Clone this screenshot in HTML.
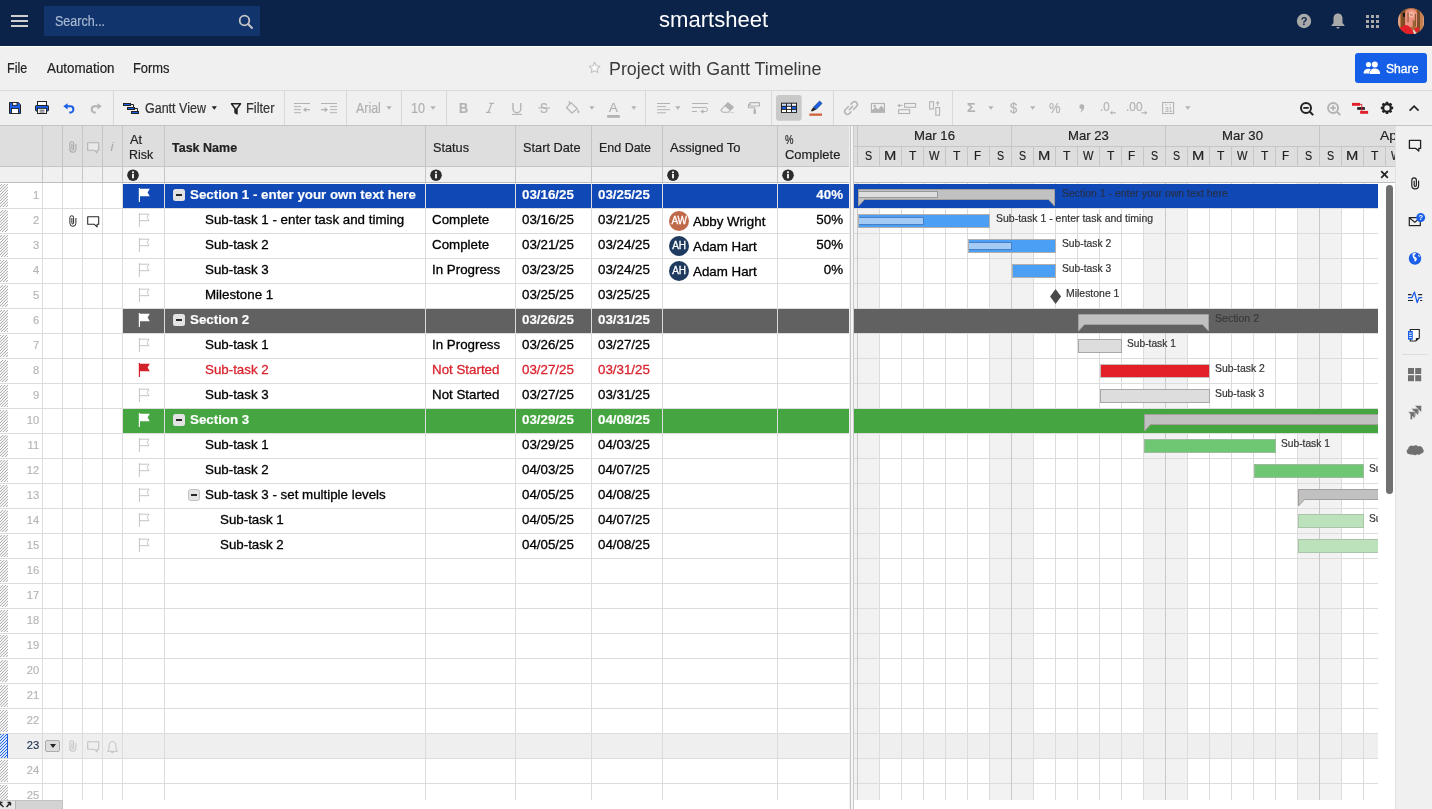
<!DOCTYPE html><html><head><meta charset="utf-8"><title>Project with Gantt Timeline</title><style>
*{box-sizing:border-box;margin:0;padding:0}
html,body{width:1432px;height:809px;overflow:hidden;background:#fff}
body{position:relative;font-family:"Liberation Sans",sans-serif;font-size:13px;color:#111}
.abs{position:absolute}
.t{position:absolute;white-space:nowrap;line-height:1}
#app{position:absolute;left:0;top:0;width:1432px;height:809px;overflow:hidden;background:#fff;will-change:transform;transform:translateZ(0)}
#top{left:0;top:0;width:1432px;height:46px;background:#0b2349}
#menu{left:0;top:47px;width:1432px;height:43px;background:#f0f0f0}
#tool{left:0;top:91px;width:1432px;height:34px;background:#f0f0f0}
.vsep{position:absolute;top:91px;height:34px;width:1px;background:#d9d9d9}
#hdr{left:0;top:126px;width:849px;height:40px;background:#dedede}
#inf{left:0;top:167px;width:849px;height:15px;background:#f0f0f0}
.hl{position:absolute;height:1px;background:#dcdcdc}
.vl{position:absolute;width:1px;background:#dcdcdc}
.rn{position:absolute;left:0;width:39.2px;text-align:right;font-size:11px;color:#b4b4b4;line-height:1;transform:scaleX(1.02);transform-origin:100% 0;-webkit-text-stroke:0.15px currentColor}
.cell{position:absolute;white-space:nowrap;line-height:1;font-size:13.33px;color:#000;-webkit-text-stroke:0.3px currentColor}
.cell.b{-webkit-text-stroke:0.15px currentColor}
.b{font-weight:bold}
.cell.w{color:#fff}
.cell.red{color:#d9232e}
.gl{position:absolute;white-space:nowrap;line-height:1;font-size:11px;color:#333}
</style></head><body><div id="app">
<div id="top" class="abs"></div>
<div class="abs" style="left:11px;top:15px;width:16.500px;height:2px;background:#cfcfcf"></div>
<div class="abs" style="left:11px;top:20px;width:16.500px;height:2px;background:#cfcfcf"></div>
<div class="abs" style="left:11px;top:25px;width:16.500px;height:2px;background:#cfcfcf"></div>
<div class="abs" style="left:44px;top:6px;width:216px;height:30px;background:#10346b;border-radius:1px"></div>
<div class="t" style="left:55.30px;top:14.15px;font-size:14px;color:#a9b9d3;font-weight:normal;font-style:normal;transform:scaleX(0.8941);transform-origin:0 0;-webkit-text-stroke:0.2px currentColor;">Search...</div>
<svg class="abs" style="left:237px;top:13px" width="18" height="18" viewBox="0 0 18 18"><circle cx="7.5" cy="7.5" r="4.8" fill="none" stroke="#c6c6c6" stroke-width="1.8"/><path d="M11 11 L15 15" stroke="#c6c6c6" stroke-width="2" stroke-linecap="round"/></svg>
<div class="t" style="left:659.20px;top:8.75px;font-size:22.5px;color:#fff;font-weight:normal;font-style:normal;transform:scaleX(0.9800);transform-origin:0 0;-webkit-text-stroke:0.2px currentColor;-webkit-text-stroke:0;">smartsheet</div>
<svg class="abs" style="left:1296px;top:13px" width="16" height="16" viewBox="0 0 16 16"><circle cx="8" cy="8" r="7.2" fill="#a9a9a9"/><text x="8" y="12" font-family="Liberation Sans" font-weight="bold" font-size="11" text-anchor="middle" fill="#0b2349">?</text></svg>
<svg class="abs" style="left:1329px;top:12px" width="18" height="18" viewBox="0 0 18 18"><path d="M9 1.5c-3 0-4.5 2.3-4.5 5v4.5L2.5 13.3v.7h13v-.7l-2-2.3V6.500c0-2.700-1.500-5-4.500-5z" fill="#a9a9a9"/><path d="M7 15h4l-2 2z" fill="#a9a9a9"/></svg>
<div class="abs" style="left:1366px;top:15px;width:3px;height:3px;background:#a9a9a9"></div>
<div class="abs" style="left:1366px;top:20px;width:3px;height:3px;background:#a9a9a9"></div>
<div class="abs" style="left:1366px;top:25px;width:3px;height:3px;background:#a9a9a9"></div>
<div class="abs" style="left:1371px;top:15px;width:3px;height:3px;background:#a9a9a9"></div>
<div class="abs" style="left:1371px;top:20px;width:3px;height:3px;background:#a9a9a9"></div>
<div class="abs" style="left:1371px;top:25px;width:3px;height:3px;background:#a9a9a9"></div>
<div class="abs" style="left:1376px;top:15px;width:3px;height:3px;background:#a9a9a9"></div>
<div class="abs" style="left:1376px;top:20px;width:3px;height:3px;background:#a9a9a9"></div>
<div class="abs" style="left:1376px;top:25px;width:3px;height:3px;background:#a9a9a9"></div>
<svg class="abs" style="left:1397.800px;top:7.800px" width="26.400" height="26.400" viewBox="0 0 26 26"><defs><clipPath id="av"><circle cx="13" cy="13" r="13"/></clipPath></defs><g clip-path="url(#av)"><rect width="26" height="26" fill="#b87343"/><rect x="0" y="0" width="2" height="26" fill="#e3a283"/><rect x="24.300" y="0" width="2" height="26" fill="#dd9a78"/><rect x="3.100" y="0" width="3.800" height="26" fill="#7d4c25"/><rect x="18.700" y="0" width="3" height="26" fill="#80502a"/><rect x="21.700" y="0" width="2.600" height="26" fill="#c58150"/><rect x="5" y="5" width="1.800" height="3.700" fill="#0d0d12"/><path d="M7.100 18.500V6c0-3 2.500-4.800 5.900-4.800s5.700 1.800 5.700 4.800v12.500z" fill="#ee9284"/><path d="M10.500 4.500q2.500-2.300 5.500 0v4q-2.700 1.500-5.500 0z" fill="#f7b3a4"/><path d="M9.900 4.500v9.500M17.200 6v12" stroke="#8a5a2c" stroke-width="1.100" fill="none"/><path d="M14.500 11.500l2.300 1.500v7h-2.300z" fill="#9a6434"/><path d="M12 6.800h2.600" stroke="#8a5a2c" stroke-width="0.800"/><path d="M3 18.700L7 16.800L9.900 17.300L14.100 21.500L15.800 26H0V21z" fill="#e3202a"/><path d="M16.200 19.900L20 18.900L21.300 21.200L18.700 24.100L17 22.900z" fill="#e3202a"/><path d="M14.500 21.800h1.300l2.500 3.200-2.100 1z" fill="#dfe3e6"/></g></svg>
<div id="menu" class="abs"></div>
<div class="t" style="left:6.80px;top:61.15px;font-size:14px;color:#222;font-weight:normal;font-style:normal;transform:scaleX(0.8956);transform-origin:0 0;-webkit-text-stroke:0.2px currentColor;">File</div>
<div class="t" style="left:46.80px;top:61.15px;font-size:14px;color:#222;font-weight:normal;font-style:normal;transform:scaleX(0.9538);transform-origin:0 0;-webkit-text-stroke:0.2px currentColor;">Automation</div>
<div class="t" style="left:133.18px;top:61.15px;font-size:14px;color:#222;font-weight:normal;font-style:normal;transform:scaleX(0.9208);transform-origin:0 0;-webkit-text-stroke:0.2px currentColor;">Forms</div>
<svg class="abs" style="left:588.200px;top:61.300px" width="13.200" height="13.200" viewBox="0 0 16 16"><path d="M8 1.600l1.950 4.200 4.550.550-3.400 3.100.9 4.550L8 11.750l-4 2.250.9-4.550-3.400-3.100 4.550-.55z" fill="#fbfbfb" stroke="#c2c2c2" stroke-width="1.300" stroke-linejoin="round"/></svg>
<div class="t" style="left:608.61px;top:59.76px;font-size:18px;color:#3a3a3a;font-weight:normal;font-style:normal;transform:scaleX(0.9920);transform-origin:0 0;-webkit-text-stroke:0.2px currentColor;-webkit-text-stroke:0;">Project with Gantt Timeline</div>
<div class="abs" style="left:1355px;top:53px;width:72px;height:30px;background:#155ee8;border-radius:3px"></div>
<svg class="abs" style="left:1363px;top:61px" width="18" height="14" viewBox="0 0 18 14"><circle cx="5.500" cy="3.500" r="2.600" fill="#fff"/><path d="M0.500 12.500c0-3 2-4.800 5-4.800 1 0 1.800.2 2.500.6-1.200 1-1.800 2.400-1.800 4.200z" fill="#fff"/><circle cx="11.800" cy="3.500" r="3" fill="#fff"/><path d="M6.500 13c0-3.400 2.200-5.400 5.300-5.400s5.300 2 5.300 5.400z" fill="#fff"/></svg>
<div class="t" style="left:1385.50px;top:61.90px;font-size:13px;color:#fff;font-weight:normal;font-style:normal;transform:scaleX(0.9344);transform-origin:0 0;-webkit-text-stroke:0.2px currentColor;-webkit-text-stroke:0.35px #fff;">Share</div>
<div class="hl" style="left:0;top:90px;width:1432px;background:#dadada"></div>
<div id="tool" class="abs"></div>
<div class="hl" style="left:0;top:125px;width:1432px;background:#c4c4c4"></div>
<div class="vsep" style="left:113px"></div>
<div class="vsep" style="left:284px"></div>
<div class="vsep" style="left:346px"></div>
<div class="vsep" style="left:401px"></div>
<div class="vsep" style="left:446px"></div>
<div class="vsep" style="left:645px"></div>
<div class="vsep" style="left:771px"></div>
<div class="vsep" style="left:833px"></div>
<div class="vsep" style="left:952px"></div>
<svg class="abs" style="left:0;top:91px" width="1432" height="34" viewBox="0 91 1432 34"><path d="M9.500 102.500H18.300L20.500 104.700V113.500H9.500Z" fill="#1a5fe8" stroke="#222" stroke-width="1"/><rect x="12.500" y="102.500" width="4.500" height="2.800" fill="#fff" stroke="#222" stroke-width="0.900"/><rect x="11.500" y="108.500" width="7" height="5" fill="#fff" stroke="#222" stroke-width="0.900"/><rect x="35.500" y="105.500" width="13" height="5.500" rx="0.800" fill="#1a5fe8" stroke="#222" stroke-width="1"/><rect x="37.500" y="101.500" width="9" height="4" fill="#fff" stroke="#222" stroke-width="1"/><rect x="37.500" y="108.300" width="9" height="5.200" fill="#fff" stroke="#222" stroke-width="1"/><path d="M39.500 110.200h5M39.500 112h5" stroke="#222" stroke-width="0.800"/><path d="M63.300 106.300L67.600 103.200V109.400Z" fill="#1a5fe8"/><path d="M67 106.300H70.300a3.100 3.100 0 0 1 0 6.200H69.300" fill="none" stroke="#1a5fe8" stroke-width="2"/><path d="M101.800 106.300L97.500 103.200V109.400Z" fill="#b3b3b3"/><path d="M98.100 106.300H94.800a3.100 3.100 0 0 0 0 6.200H95.800" fill="none" stroke="#b3b3b3" stroke-width="2"/><rect x="123.5" y="103.5" width="7" height="2" fill="#1a5fe8" stroke="#222" stroke-width="1"/><rect x="127.5" y="107.5" width="7" height="2" fill="#1a5fe8" stroke="#222" stroke-width="1"/><rect x="131.5" y="111.5" width="7" height="2" fill="#1a5fe8" stroke="#222" stroke-width="1"/><path d="M131 104.500H133.500V107M135 108.500H137.500V111" fill="none" stroke="#222" stroke-width="1"/><path d="M211.7 106.2h5.200l-2.600 3.600z" fill="#222"/><path d="M231.400 103.800h9.200l-3.600 4.700v5.400l-2-1.300v-4.100z" fill="none" stroke="#222" stroke-width="1.400" stroke-linejoin="round"/><path d="M234.900 108.400h2.200v5.400l-2.200-1.300z" fill="#222"/><path d="M294 103.500h16M294 106.600h7M294 109.700h7M294 112.700h7" stroke="#b3b3b3" stroke-width="1"/><path d="M303 109.700l3.200-2.600v5.200z" fill="#b3b3b3"/><path d="M305.500 109.700h4.500" stroke="#b3b3b3" stroke-width="1.300"/><path d="M321 103.500h16M330 106.600h7M330 109.700h7M330 112.700h7" stroke="#b3b3b3" stroke-width="1"/><path d="M328 109.700l-3.200-2.600v5.200z" fill="#b3b3b3"/><path d="M321 109.700h4.500" stroke="#b3b3b3" stroke-width="1.300"/><path d="M386.5 106.2h5.200l-2.600 3.600z" fill="#b3b3b3"/><path d="M430.4 106.2h5.200l-2.600 3.600z" fill="#b3b3b3"/><path d="M489.300 103.300h4.700M486 112.300h4.700M491.800 103.300l-3.500 9" stroke="#b3b3b3" stroke-width="1.200" fill="none"/><path d="M513 103v5.800a3.900 3.900 0 0 0 7.800 0V103" fill="none" stroke="#b3b3b3" stroke-width="1.400"/><path d="M512 114.400h10" stroke="#b3b3b3" stroke-width="1.100"/><path d="M538.300 107.900h11.500" stroke="#b3b3b3" stroke-width="1.100"/><path d="M571 102.600L577.300 108.700L572 113L566.600 107.700Z" fill="none" stroke="#b3b3b3" stroke-width="1.200" stroke-linejoin="round"/><path d="M569.300 100.900q-0.800 1.500 1 3.500" fill="none" stroke="#b3b3b3" stroke-width="1.100"/><path d="M578.300 109.600q1.500 2 0.900 3q-0.900 1-1.800 0q-0.600-1 0.900-3z" fill="#b3b3b3"/><path d="M589.3 106.2h5.200l-2.600 3.600z" fill="#b3b3b3"/><rect x="607.200" y="115" width="12.600" height="2.800" fill="#b3b3b3"/><path d="M631.3 106.2h5.200l-2.600 3.600z" fill="#b3b3b3"/><path d="M657 103.500h13M657 106.600h9M657 109.700h13M657 112.800h9" stroke="#b3b3b3" stroke-width="1"/><path d="M675.3 106.2h5.200l-2.600 3.600z" fill="#b3b3b3"/><path d="M692 103.500h16M692 107.500h13.500a2 2 0 0 1 0 4H703M692 111.500h5" fill="none" stroke="#b3b3b3" stroke-width="1"/><path d="M700.300 111.500l3-2.300v4.600z" fill="#b3b3b3"/><path d="M727.800 102.800L733.400 107.200L728.300 112.300H723L720.800 110.200Z" fill="none" stroke="#b3b3b3" stroke-width="1.100" stroke-linejoin="round"/><path d="M727.800 102.800L733.400 107.200L730 110.600L724.500 106Z" fill="#b3b3b3"/><path d="M730.500 112.500h1M732.500 112.500h1" stroke="#b3b3b3" stroke-width="1"/><rect x="750" y="102.600" width="9.500" height="3.400" rx="0.500" fill="none" stroke="#b3b3b3" stroke-width="1.200"/><path d="M750 104.300H748.500V107.700H754.700V109.500" fill="none" stroke="#b3b3b3" stroke-width="1.100"/><rect x="753.500" y="109.300" width="2.500" height="4.600" fill="#b3b3b3"/><rect x="776" y="95" width="25.700" height="25.700" rx="3" fill="#c9c9c9"/><rect x="781" y="102.700" width="16" height="10.200" fill="#222"/><rect x="782" y="103.7" width="4" height="2.100" fill="#cfe0fb"/><rect x="787" y="103.7" width="4" height="2.100" fill="#cfe0fb"/><rect x="792" y="103.7" width="4" height="2.100" fill="#fff"/><rect x="782" y="106.8" width="4" height="2.100" fill="#1a5fe8"/><rect x="787" y="106.8" width="4" height="2.100" fill="#fff"/><rect x="792" y="106.8" width="4" height="2.100" fill="#1a5fe8"/><rect x="782" y="109.9" width="4" height="2.100" fill="#fff"/><rect x="787" y="109.9" width="4" height="2.100" fill="#fff"/><rect x="792" y="109.9" width="4" height="2.100" fill="#cfe0fb"/><path d="M819.600 101L822 103.400L816 109.600L813.500 107.200Z" fill="#1a5fe8" stroke="#173a7a" stroke-width="0.700"/><path d="M813.500 107.200L816 109.600L812.800 111.200L811 111.200L811.600 109.600Z" fill="#222"/><rect x="809.400" y="113.500" width="12.600" height="2.300" fill="#d0623a"/><g fill="none" stroke="#b3b3b3" stroke-width="1.500" stroke-linecap="round" transform="rotate(-45 851 108)"><path d="M850.300 105.200H846a2.800 2.800 0 0 0 0 5.600H848.300"/><path d="M851.700 110.800H856a2.800 2.800 0 0 0 0-5.600H853.700"/><path d="M848.600 108H853.400"/></g><rect x="871.400" y="103.500" width="13" height="8.800" fill="none" stroke="#b3b3b3" stroke-width="1.200"/><path d="M872 112v-1.800l3.600-3.200 2.600 2.400 3.100-3.900 2.700 3.500v3z" fill="#b3b3b3"/><circle cx="874.700" cy="106" r="1.250" fill="#b3b3b3"/><rect x="904.600" y="103.500" width="11" height="3.800" fill="none" stroke="#b3b3b3" stroke-width="1.100"/><rect x="898.600" y="109.700" width="11" height="3.800" fill="none" stroke="#b3b3b3" stroke-width="1.100"/><path d="M897.200 105.400l2.600-2v4z" fill="#b3b3b3"/><path d="M899 105.400h3.800" stroke="#b3b3b3" stroke-width="1"/><rect x="929.700" y="101.700" width="3.800" height="7.300" fill="none" stroke="#b3b3b3" stroke-width="1.100"/><rect x="935.800" y="107.500" width="3.800" height="7.700" fill="none" stroke="#b3b3b3" stroke-width="1.100"/><path d="M937.700 101l2.100 2.500h-4.200z" fill="#b3b3b3"/><path d="M937.700 103v2.800" stroke="#b3b3b3" stroke-width="1"/><path d="M988.3 106.2h5.200l-2.600 3.600z" fill="#b3b3b3"/><path d="M1030.1 106.2h5.200l-2.600 3.600z" fill="#b3b3b3"/><path d="M1081.800 104.300a2.400 2.400 0 0 1 2.400 2.600q0 3.600-4.300 5.800q1.800-2 1.700-3.600a2.400 2.400 0 0 1 0.200-4.800z" fill="#b3b3b3"/><path d="M1109.800 112.800l2.600-2v4z" fill="#b3b3b3"/><path d="M1112 112.800h4" stroke="#b3b3b3" stroke-width="1.100"/><path d="M1147.500 112.800l-2.600-2v4z" fill="#b3b3b3"/><path d="M1141.400 112.800h4" stroke="#b3b3b3" stroke-width="1.100"/><rect x="1162.600" y="102.500" width="11" height="11" fill="none" stroke="#b3b3b3" stroke-width="1.100"/><rect x="1165.500" y="104.200" width="1.200" height="1.200" fill="#b3b3b3"/><rect x="1169.500" y="104.200" width="1.200" height="1.200" fill="#b3b3b3"/><path d="M1185.2 106.2h5.200l-2.600 3.600z" fill="#b3b3b3"/><circle cx="1306" cy="107.900" r="5" fill="none" stroke="#222" stroke-width="2"/><path d="M1309.800 111.700l3.400 3.400" stroke="#222" stroke-width="2"/><path d="M1303.300 107.900h5.400" stroke="#222" stroke-width="1.800"/><circle cx="1333.100" cy="107.900" r="5" fill="none" stroke="#b3b3b3" stroke-width="2"/><path d="M1336.900 111.700l3.400 3.400" stroke="#b3b3b3" stroke-width="2"/><path d="M1330.400 107.900h5.400M1333.100 105.200v5.400" stroke="#b3b3b3" stroke-width="1.800"/><rect x="1352" y="102.900" width="8" height="2.900" fill="#e0202a"/><rect x="1357.200" y="107.100" width="7.700" height="2.700" fill="#222"/><rect x="1360.100" y="110.900" width="8" height="2.900" fill="#e0202a"/><path d="M1360 104.400h1.800v6.500" fill="none" stroke="#e0202a" stroke-width="1"/><path d="M1393.19 106.71 L1393.19 109.09 L1391.67 109.39 L1391.36 110.14 L1392.22 111.43 L1390.53 113.12 L1389.24 112.26 L1388.49 112.57 L1388.19 114.09 L1385.81 114.09 L1385.51 112.57 L1384.76 112.26 L1383.47 113.12 L1381.78 111.43 L1382.64 110.14 L1382.33 109.39 L1380.81 109.09 L1380.81 106.71 L1382.33 106.41 L1382.64 105.66 L1381.78 104.37 L1383.47 102.68 L1384.76 103.54 L1385.51 103.23 L1385.81 101.71 L1388.19 101.71 L1388.49 103.23 L1389.24 103.54 L1390.53 102.68 L1392.22 104.37 L1391.36 105.66 L1391.67 106.41Z M1389.700 107.900a2.700 2.700 0 1 0 -5.400 0a2.700 2.700 0 1 0 5.400 0Z" fill="#222" fill-rule="evenodd"/><path d="M1409.600 110.600l4.500-4.500 4.500 4.500" fill="none" stroke="#222" stroke-width="1.600"/></svg>
<div class="t" style="left:144.70px;top:101.25px;font-size:14px;color:#333;font-weight:normal;font-style:normal;transform:scaleX(0.8927);transform-origin:0 0;-webkit-text-stroke:0.2px currentColor;">Gantt View</div>
<div class="t" style="left:245.88px;top:101.25px;font-size:14px;color:#333;font-weight:normal;font-style:normal;transform:scaleX(0.9163);transform-origin:0 0;-webkit-text-stroke:0.2px currentColor;">Filter</div>
<div class="t" style="left:356.20px;top:100.95px;font-size:14px;color:#b0b0b0;font-weight:normal;font-style:normal;transform:scaleX(0.8854);transform-origin:0 0;-webkit-text-stroke:0.2px currentColor;">Arial</div>
<div class="t" style="left:410.90px;top:100.95px;font-size:14px;color:#b0b0b0;font-weight:normal;font-style:normal;transform:scaleX(0.8995);transform-origin:0 0;-webkit-text-stroke:0.2px currentColor;">10</div>
<div class="t" style="left:458.70px;top:100.85px;font-size:14px;color:#b3b3b3;font-weight:bold;font-style:normal;transform:scaleX(0.9000);transform-origin:0 0;-webkit-text-stroke:0.2px currentColor;">B</div>
<div class="t" style="left:540.30px;top:101.05px;font-size:14px;color:#b3b3b3;font-weight:normal;font-style:normal;transform:scaleX(0.8444);transform-origin:0 0;-webkit-text-stroke:0.2px currentColor;">S</div>
<div class="t" style="left:609.00px;top:100.70px;font-size:13px;color:#b3b3b3;font-weight:normal;font-style:normal;transform:scaleX(1.0222);transform-origin:0 0;-webkit-text-stroke:0.2px currentColor;">A</div>
<div class="t" style="left:966.80px;top:100.97px;font-size:13.5px;color:#b3b3b3;font-weight:bold;font-style:normal;transform:scaleX(1.0375);transform-origin:0 0;-webkit-text-stroke:0.2px currentColor;">Σ</div>
<div class="t" style="left:1010.10px;top:100.95px;font-size:14px;color:#b3b3b3;font-weight:normal;font-style:normal;transform:scaleX(0.9250);transform-origin:0 0;-webkit-text-stroke:0.2px currentColor;">$</div>
<div class="t" style="left:1049.20px;top:101.35px;font-size:14px;color:#b3b3b3;font-weight:normal;font-style:normal;transform:scaleX(0.9250);transform-origin:0 0;-webkit-text-stroke:0.2px currentColor;">%</div>
<div class="t" style="left:1099.75px;top:101.04px;font-size:12px;color:#b3b3b3;font-weight:normal;font-style:normal;transform:scaleX(0.9535);transform-origin:0 0;-webkit-text-stroke:0.2px currentColor;">.0</div>
<div class="t" style="left:1125.81px;top:101.04px;font-size:12px;color:#b3b3b3;font-weight:normal;font-style:normal;transform:scaleX(0.9870);transform-origin:0 0;-webkit-text-stroke:0.2px currentColor;">.00</div>
<div class="t" style="left:1164.60px;top:105.85px;font-size:7.5px;color:#b3b3b3;font-weight:normal;font-style:normal;transform:scaleX(0.8811);transform-origin:0 0;-webkit-text-stroke:0.2px currentColor;">31</div>
<div id="hdr" class="abs"></div><div id="inf" class="abs"></div>
<div class="vl" style="left:42px;top:126px;height:57px;background:#c6c6c6"></div>
<div class="vl" style="left:62px;top:126px;height:57px;background:#c6c6c6"></div>
<div class="vl" style="left:82px;top:126px;height:57px;background:#c6c6c6"></div>
<div class="vl" style="left:102px;top:126px;height:57px;background:#c6c6c6"></div>
<div class="vl" style="left:122px;top:126px;height:57px;background:#c6c6c6"></div>
<div class="vl" style="left:164px;top:126px;height:57px;background:#c6c6c6"></div>
<div class="vl" style="left:425px;top:126px;height:57px;background:#c6c6c6"></div>
<div class="vl" style="left:515px;top:126px;height:57px;background:#c6c6c6"></div>
<div class="vl" style="left:591px;top:126px;height:57px;background:#c6c6c6"></div>
<div class="vl" style="left:662px;top:126px;height:57px;background:#c6c6c6"></div>
<div class="vl" style="left:777px;top:126px;height:57px;background:#c6c6c6"></div>
<div class="hl" style="left:0;top:166px;width:849px;background:#c6c6c6"></div>
<div class="hl" style="left:0;top:182px;width:849px;background:#bdbdbd"></div>
<svg class="abs" style="left:69.3px;top:141px" width="8" height="12.500" viewBox="0 0 8 12.500"><path d="M6.900 3.400v4.900a3 3 0 0 1-6 0V2.600a1.850 1.850 0 0 1 3.700 0v5.500a0.850 0.850 0 0 1-1.700 0V3.400" fill="none" stroke="#a9a9a9" stroke-width="1.1" stroke-linecap="round"/></svg>
<svg class="abs" style="left:86.5px;top:141.5px" width="13" height="12" viewBox="0 0 13 12"><path d="M0.700 0.700h11v7.600h-1.600v2.600l-2.700-2.600h-6.700z" fill="#e9e9e9" stroke="#b2b2b2" stroke-width="1.1" stroke-linejoin="round"/></svg>
<div class="t" style="left:110.500px;top:139.500px;font-size:13.500px;color:#a8a8a8;font-style:italic">i</div>
<div class="t" style="left:130.10px;top:133.10px;font-size:13px;color:#222;font-weight:normal;font-style:normal;transform:scaleX(0.9865);transform-origin:0 0;-webkit-text-stroke:0.2px currentColor;">At</div>
<div class="t" style="left:129.35px;top:148.20px;font-size:13px;color:#222;font-weight:normal;font-style:normal;transform:scaleX(0.9525);transform-origin:0 0;-webkit-text-stroke:0.2px currentColor;">Risk</div>
<div class="t" style="left:172.00px;top:141.40px;font-size:13px;color:#222;font-weight:bold;font-style:normal;transform:scaleX(0.9621);transform-origin:0 0;-webkit-text-stroke:0.2px currentColor;">Task Name</div>
<div class="t" style="left:433.20px;top:141.40px;font-size:13px;color:#222;font-weight:normal;font-style:normal;transform:scaleX(0.9771);transform-origin:0 0;-webkit-text-stroke:0.2px currentColor;">Status</div>
<div class="t" style="left:523.10px;top:141.40px;font-size:13px;color:#222;font-weight:normal;font-style:normal;transform:scaleX(0.9829);transform-origin:0 0;-webkit-text-stroke:0.2px currentColor;">Start Date</div>
<div class="t" style="left:598.54px;top:141.40px;font-size:13px;color:#222;font-weight:normal;font-style:normal;transform:scaleX(0.9590);transform-origin:0 0;-webkit-text-stroke:0.2px currentColor;">End Date</div>
<div class="t" style="left:670.20px;top:141.40px;font-size:13px;color:#222;font-weight:normal;font-style:normal;transform:scaleX(1.0001);transform-origin:0 0;-webkit-text-stroke:0.2px currentColor;">Assigned To</div>
<div class="t" style="left:785.30px;top:133.10px;font-size:13px;color:#222;font-weight:normal;font-style:normal;transform:scaleX(0.7333);transform-origin:0 0;-webkit-text-stroke:0.2px currentColor;">%</div>
<div class="t" style="left:785.30px;top:148.20px;font-size:13px;color:#222;font-weight:normal;font-style:normal;transform:scaleX(0.9945);transform-origin:0 0;-webkit-text-stroke:0.2px currentColor;">Complete</div>
<svg class="abs" style="left:127px;top:169px" width="12" height="12" viewBox="0 0 12 12"><circle cx="6" cy="6.200" r="5.800" fill="#2c2c2c"/><rect x="5.100" y="5" width="1.800" height="4.300" fill="#fff"/><rect x="5.100" y="2.400" width="1.800" height="1.800" fill="#fff"/></svg>
<svg class="abs" style="left:430px;top:169px" width="12" height="12" viewBox="0 0 12 12"><circle cx="6" cy="6.200" r="5.800" fill="#2c2c2c"/><rect x="5.100" y="5" width="1.800" height="4.300" fill="#fff"/><rect x="5.100" y="2.400" width="1.800" height="1.800" fill="#fff"/></svg>
<svg class="abs" style="left:667px;top:169px" width="12" height="12" viewBox="0 0 12 12"><circle cx="6" cy="6.200" r="5.800" fill="#2c2c2c"/><rect x="5.100" y="5" width="1.800" height="4.300" fill="#fff"/><rect x="5.100" y="2.400" width="1.800" height="1.800" fill="#fff"/></svg>
<svg class="abs" style="left:782px;top:169px" width="12" height="12" viewBox="0 0 12 12"><circle cx="6" cy="6.200" r="5.800" fill="#2c2c2c"/><rect x="5.100" y="5" width="1.800" height="4.300" fill="#fff"/><rect x="5.100" y="2.400" width="1.800" height="1.800" fill="#fff"/></svg>
<div class="abs" style="left:0;top:183px;width:1395px;height:617px;overflow:hidden">
<svg class="abs" style="left:0;top:0" width="9" height="617" viewBox="0 0 9 617" shape-rendering="crispEdges"><defs><pattern id="hg" width="3" height="3" patternUnits="userSpaceOnUse"><rect width="3" height="3" fill="#f4f4f4"/><rect x="0" y="2" width="1" height="1" fill="#b2b2b2"/><rect x="1" y="1" width="1" height="1" fill="#b2b2b2"/><rect x="2" y="0" width="1" height="1" fill="#b2b2b2"/></pattern><pattern id="hb" width="3" height="3" patternUnits="userSpaceOnUse"><rect width="3" height="3" fill="#d6e4fb"/><rect x="0" y="2" width="1" height="1" fill="#2b6be3"/><rect x="1" y="1" width="1" height="1" fill="#2b6be3"/><rect x="2" y="0" width="1" height="1" fill="#2b6be3"/></pattern></defs>
<rect x="0" y="1" width="8" height="23" fill="url(#hg)"/>
<rect x="0" y="27" width="8" height="22" fill="url(#hg)"/>
<rect x="0" y="52" width="8" height="22" fill="url(#hg)"/>
<rect x="0" y="77" width="8" height="22" fill="url(#hg)"/>
<rect x="0" y="102" width="8" height="22" fill="url(#hg)"/>
<rect x="0" y="127" width="8" height="22" fill="url(#hg)"/>
<rect x="0" y="152" width="8" height="22" fill="url(#hg)"/>
<rect x="0" y="177" width="8" height="22" fill="url(#hg)"/>
<rect x="0" y="202" width="8" height="22" fill="url(#hg)"/>
<rect x="0" y="227" width="8" height="22" fill="url(#hg)"/>
<rect x="0" y="252" width="8" height="22" fill="url(#hg)"/>
<rect x="0" y="277" width="8" height="22" fill="url(#hg)"/>
<rect x="0" y="302" width="8" height="22" fill="url(#hg)"/>
<rect x="0" y="327" width="8" height="22" fill="url(#hg)"/>
<rect x="0" y="352" width="8" height="22" fill="url(#hg)"/>
<rect x="0" y="377" width="8" height="22" fill="url(#hg)"/>
<rect x="0" y="402" width="8" height="22" fill="url(#hg)"/>
<rect x="0" y="427" width="8" height="22" fill="url(#hg)"/>
<rect x="0" y="452" width="8" height="22" fill="url(#hg)"/>
<rect x="0" y="477" width="8" height="22" fill="url(#hg)"/>
<rect x="0" y="502" width="8" height="22" fill="url(#hg)"/>
<rect x="0" y="527" width="8" height="22" fill="url(#hg)"/>
<rect x="0" y="551" width="8" height="24" fill="url(#hb)"/><path d="M0 550.5H7.500V575.5H0" fill="none" stroke="#1a5be0" stroke-width="1"/>
<rect x="0" y="577" width="8" height="22" fill="url(#hg)"/>
<rect x="0" y="602" width="8" height="22" fill="url(#hg)"/>
</svg>
<div class="abs" style="left:8px;top:551px;width:841px;height:24px;background:#efefef"></div>
<div class="abs" style="left:123px;top:1px;width:726px;height:24px;background:#1048b5"></div>
<div class="abs" style="left:123px;top:126px;width:726px;height:24px;background:#616161"></div>
<div class="abs" style="left:123px;top:226px;width:726px;height:24px;background:#45a540"></div>
<div class="hl" style="left:0;top:25px;width:849px"></div>
<div class="hl" style="left:0;top:50px;width:849px"></div>
<div class="hl" style="left:0;top:75px;width:849px"></div>
<div class="hl" style="left:0;top:100px;width:849px"></div>
<div class="hl" style="left:0;top:125px;width:849px"></div>
<div class="hl" style="left:0;top:150px;width:849px"></div>
<div class="hl" style="left:0;top:175px;width:849px"></div>
<div class="hl" style="left:0;top:200px;width:849px"></div>
<div class="hl" style="left:0;top:225px;width:849px"></div>
<div class="hl" style="left:0;top:250px;width:849px"></div>
<div class="hl" style="left:0;top:275px;width:849px"></div>
<div class="hl" style="left:0;top:300px;width:849px"></div>
<div class="hl" style="left:0;top:325px;width:849px"></div>
<div class="hl" style="left:0;top:350px;width:849px"></div>
<div class="hl" style="left:0;top:375px;width:849px"></div>
<div class="hl" style="left:0;top:400px;width:849px"></div>
<div class="hl" style="left:0;top:425px;width:849px"></div>
<div class="hl" style="left:0;top:450px;width:849px"></div>
<div class="hl" style="left:0;top:475px;width:849px"></div>
<div class="hl" style="left:0;top:500px;width:849px"></div>
<div class="hl" style="left:0;top:525px;width:849px"></div>
<div class="hl" style="left:0;top:550px;width:849px"></div>
<div class="hl" style="left:0;top:575px;width:849px"></div>
<div class="hl" style="left:0;top:600px;width:849px"></div>
<div class="hl" style="left:0;top:625px;width:849px"></div>
<div class="vl" style="left:42px;top:0;height:617px"></div>
<div class="vl" style="left:62px;top:0;height:617px"></div>
<div class="vl" style="left:82px;top:0;height:617px"></div>
<div class="vl" style="left:102px;top:0;height:617px"></div>
<div class="vl" style="left:122px;top:0;height:617px"></div>
<div class="vl" style="left:164px;top:0;height:617px"></div>
<div class="vl" style="left:425px;top:0;height:617px"></div>
<div class="vl" style="left:515px;top:0;height:617px"></div>
<div class="vl" style="left:591px;top:0;height:617px"></div>
<div class="vl" style="left:662px;top:0;height:617px"></div>
<div class="vl" style="left:777px;top:0;height:617px"></div>
<div class="rn" style="top:6.8px;color:#b4b4b4">1</div>
<svg class="abs" style="left:138.2px;top:4.5px" width="13" height="15" viewBox="0 0 13 15"><path d="M1.500 0.700H11.800L9.600 4.400L11.800 8.200H1.500z" fill="#fff"/><rect x="0.800" y="0" width="1.200" height="14" fill="#fff"/></svg>
<div class="abs" style="left:173px;top:6px;width:12px;height:12px;background:#e3e3e3;border:none;border-radius:2.500px"></div><div class="abs" style="left:176px;top:11px;width:6px;height:2px;background:#2a2a2a"></div>
<div class="cell b w" style="left:190px;top:5px">Section 1 - enter your own text here</div>
<div class="cell b w" style="left:522px;top:5px">03/16/25</div>
<div class="cell b w" style="left:598px;top:5px">03/25/25</div>
<div class="cell b w" style="left:780px;width:63px;text-align:right;top:5px">40%</div>
<div class="rn" style="top:31.8px;color:#b4b4b4">2</div>
<svg class="abs" style="left:138.2px;top:29.5px" width="13" height="15" viewBox="0 0 13 15"><path d="M1.400 1.200H11L9.100 4.400L11 7.700H1.400" fill="none" stroke="#bebebe" stroke-width="0.900"/><path d="M1.400 0v14" stroke="#bebebe" stroke-width="0.900"/></svg>
<div class="cell" style="left:205px;top:30px">Sub-task 1 - enter task and timing</div>
<div class="cell" style="left:432px;top:30px">Complete</div>
<div class="cell" style="left:522px;top:30px">03/16/25</div>
<div class="cell" style="left:598px;top:30px">03/21/25</div>
<div class="abs" style="left:669px;top:28px;width:20px;height:20px;border-radius:10px;background:#c0694a;color:#fff;font-size:10px;line-height:20px;text-align:center;letter-spacing:-0.300px;-webkit-text-stroke:0.300px #fff">AW</div>
<div class="cell" style="left:693px;top:32px">Abby Wright</div>
<div class="cell" style="left:780px;width:63px;text-align:right;top:30px">50%</div>
<svg class="abs" style="left:68.6px;top:32.2px" width="8" height="12.500" viewBox="0 0 8 12.500"><path d="M6.900 3.400v4.900a3 3 0 0 1-6 0V2.600a1.850 1.850 0 0 1 3.700 0v5.500a0.850 0.850 0 0 1-1.700 0V3.400" fill="none" stroke="#2a2a2a" stroke-width="1.0" stroke-linecap="round"/></svg>
<svg class="abs" style="left:86.5px;top:32.8px" width="13" height="12" viewBox="0 0 13 12"><path d="M0.700 0.700h11v7.600h-1.600v2.600l-2.700-2.600h-6.700z" fill="none" stroke="#262626" stroke-width="1.05" stroke-linejoin="round"/></svg>
<div class="rn" style="top:56.8px;color:#b4b4b4">3</div>
<svg class="abs" style="left:138.2px;top:54.5px" width="13" height="15" viewBox="0 0 13 15"><path d="M1.400 1.200H11L9.100 4.400L11 7.700H1.400" fill="none" stroke="#bebebe" stroke-width="0.900"/><path d="M1.400 0v14" stroke="#bebebe" stroke-width="0.900"/></svg>
<div class="cell" style="left:205px;top:55px">Sub-task 2</div>
<div class="cell" style="left:432px;top:55px">Complete</div>
<div class="cell" style="left:522px;top:55px">03/21/25</div>
<div class="cell" style="left:598px;top:55px">03/24/25</div>
<div class="abs" style="left:669px;top:53px;width:20px;height:20px;border-radius:10px;background:#1f3a5f;color:#fff;font-size:10px;line-height:20px;text-align:center;letter-spacing:-0.300px;-webkit-text-stroke:0.300px #fff">AH</div>
<div class="cell" style="left:693px;top:57px">Adam Hart</div>
<div class="cell" style="left:780px;width:63px;text-align:right;top:55px">50%</div>
<div class="rn" style="top:81.8px;color:#b4b4b4">4</div>
<svg class="abs" style="left:138.2px;top:79.5px" width="13" height="15" viewBox="0 0 13 15"><path d="M1.400 1.200H11L9.100 4.400L11 7.700H1.400" fill="none" stroke="#bebebe" stroke-width="0.900"/><path d="M1.400 0v14" stroke="#bebebe" stroke-width="0.900"/></svg>
<div class="cell" style="left:205px;top:80px">Sub-task 3</div>
<div class="cell" style="left:432px;top:80px">In Progress</div>
<div class="cell" style="left:522px;top:80px">03/23/25</div>
<div class="cell" style="left:598px;top:80px">03/24/25</div>
<div class="abs" style="left:669px;top:78px;width:20px;height:20px;border-radius:10px;background:#1f3a5f;color:#fff;font-size:10px;line-height:20px;text-align:center;letter-spacing:-0.300px;-webkit-text-stroke:0.300px #fff">AH</div>
<div class="cell" style="left:693px;top:82px">Adam Hart</div>
<div class="cell" style="left:780px;width:63px;text-align:right;top:80px">0%</div>
<div class="rn" style="top:106.8px;color:#b4b4b4">5</div>
<svg class="abs" style="left:138.2px;top:104.5px" width="13" height="15" viewBox="0 0 13 15"><path d="M1.400 1.200H11L9.100 4.400L11 7.700H1.400" fill="none" stroke="#bebebe" stroke-width="0.900"/><path d="M1.400 0v14" stroke="#bebebe" stroke-width="0.900"/></svg>
<div class="cell" style="left:205px;top:105px">Milestone 1</div>
<div class="cell" style="left:522px;top:105px">03/25/25</div>
<div class="cell" style="left:598px;top:105px">03/25/25</div>
<div class="rn" style="top:131.8px;color:#b4b4b4">6</div>
<svg class="abs" style="left:138.2px;top:129.5px" width="13" height="15" viewBox="0 0 13 15"><path d="M1.500 0.700H11.800L9.600 4.400L11.800 8.200H1.500z" fill="#fff"/><rect x="0.800" y="0" width="1.200" height="14" fill="#fff"/></svg>
<div class="abs" style="left:173px;top:131px;width:12px;height:12px;background:#e3e3e3;border:none;border-radius:2.500px"></div><div class="abs" style="left:176px;top:136px;width:6px;height:2px;background:#2a2a2a"></div>
<div class="cell b w" style="left:190px;top:130px">Section 2</div>
<div class="cell b w" style="left:522px;top:130px">03/26/25</div>
<div class="cell b w" style="left:598px;top:130px">03/31/25</div>
<div class="rn" style="top:156.8px;color:#b4b4b4">7</div>
<svg class="abs" style="left:138.2px;top:154.5px" width="13" height="15" viewBox="0 0 13 15"><path d="M1.400 1.200H11L9.100 4.400L11 7.700H1.400" fill="none" stroke="#bebebe" stroke-width="0.900"/><path d="M1.400 0v14" stroke="#bebebe" stroke-width="0.900"/></svg>
<div class="cell" style="left:205px;top:155px">Sub-task 1</div>
<div class="cell" style="left:432px;top:155px">In Progress</div>
<div class="cell" style="left:522px;top:155px">03/26/25</div>
<div class="cell" style="left:598px;top:155px">03/27/25</div>
<div class="rn" style="top:181.8px;color:#b4b4b4">8</div>
<svg class="abs" style="left:138.2px;top:179.5px" width="13" height="15" viewBox="0 0 13 15"><path d="M1.500 0.700H11.800L9.600 4.400L11.800 8.200H1.500z" fill="#d3222a"/><rect x="0.800" y="0" width="1.200" height="14" fill="#d3222a"/></svg>
<div class="cell red" style="left:205px;top:180px">Sub-task 2</div>
<div class="cell red" style="left:432px;top:180px">Not Started</div>
<div class="cell red" style="left:522px;top:180px">03/27/25</div>
<div class="cell red" style="left:598px;top:180px">03/31/25</div>
<div class="rn" style="top:206.8px;color:#b4b4b4">9</div>
<svg class="abs" style="left:138.2px;top:204.5px" width="13" height="15" viewBox="0 0 13 15"><path d="M1.400 1.200H11L9.100 4.400L11 7.700H1.400" fill="none" stroke="#bebebe" stroke-width="0.900"/><path d="M1.400 0v14" stroke="#bebebe" stroke-width="0.900"/></svg>
<div class="cell" style="left:205px;top:205px">Sub-task 3</div>
<div class="cell" style="left:432px;top:205px">Not Started</div>
<div class="cell" style="left:522px;top:205px">03/27/25</div>
<div class="cell" style="left:598px;top:205px">03/31/25</div>
<div class="rn" style="top:231.8px;color:#b4b4b4">10</div>
<svg class="abs" style="left:138.2px;top:229.5px" width="13" height="15" viewBox="0 0 13 15"><path d="M1.500 0.700H11.800L9.600 4.400L11.800 8.200H1.500z" fill="#fff"/><rect x="0.800" y="0" width="1.200" height="14" fill="#fff"/></svg>
<div class="abs" style="left:173px;top:231px;width:12px;height:12px;background:#e3e3e3;border:none;border-radius:2.500px"></div><div class="abs" style="left:176px;top:236px;width:6px;height:2px;background:#2a2a2a"></div>
<div class="cell b w" style="left:190px;top:230px">Section 3</div>
<div class="cell b w" style="left:522px;top:230px">03/29/25</div>
<div class="cell b w" style="left:598px;top:230px">04/08/25</div>
<div class="rn" style="top:256.8px;color:#b4b4b4">11</div>
<svg class="abs" style="left:138.2px;top:254.5px" width="13" height="15" viewBox="0 0 13 15"><path d="M1.400 1.200H11L9.100 4.400L11 7.700H1.400" fill="none" stroke="#bebebe" stroke-width="0.900"/><path d="M1.400 0v14" stroke="#bebebe" stroke-width="0.900"/></svg>
<div class="cell" style="left:205px;top:255px">Sub-task 1</div>
<div class="cell" style="left:522px;top:255px">03/29/25</div>
<div class="cell" style="left:598px;top:255px">04/03/25</div>
<div class="rn" style="top:281.8px;color:#b4b4b4">12</div>
<svg class="abs" style="left:138.2px;top:279.5px" width="13" height="15" viewBox="0 0 13 15"><path d="M1.400 1.200H11L9.100 4.400L11 7.700H1.400" fill="none" stroke="#bebebe" stroke-width="0.900"/><path d="M1.400 0v14" stroke="#bebebe" stroke-width="0.900"/></svg>
<div class="cell" style="left:205px;top:280px">Sub-task 2</div>
<div class="cell" style="left:522px;top:280px">04/03/25</div>
<div class="cell" style="left:598px;top:280px">04/07/25</div>
<div class="rn" style="top:306.8px;color:#b4b4b4">13</div>
<svg class="abs" style="left:138.2px;top:304.5px" width="13" height="15" viewBox="0 0 13 15"><path d="M1.400 1.200H11L9.100 4.400L11 7.700H1.400" fill="none" stroke="#bebebe" stroke-width="0.900"/><path d="M1.400 0v14" stroke="#bebebe" stroke-width="0.900"/></svg>
<div class="abs" style="left:188px;top:306px;width:12px;height:12px;background:#e4e4e4;border:1px solid #c2c2c2;border-radius:2.500px"></div><div class="abs" style="left:191px;top:311px;width:6px;height:2px;background:#2a2a2a"></div>
<div class="cell" style="left:205px;top:305px">Sub-task 3 - set multiple levels</div>
<div class="cell" style="left:522px;top:305px">04/05/25</div>
<div class="cell" style="left:598px;top:305px">04/08/25</div>
<div class="rn" style="top:331.8px;color:#b4b4b4">14</div>
<svg class="abs" style="left:138.2px;top:329.5px" width="13" height="15" viewBox="0 0 13 15"><path d="M1.400 1.200H11L9.100 4.400L11 7.700H1.400" fill="none" stroke="#bebebe" stroke-width="0.900"/><path d="M1.400 0v14" stroke="#bebebe" stroke-width="0.900"/></svg>
<div class="cell" style="left:220px;top:330px">Sub-task 1</div>
<div class="cell" style="left:522px;top:330px">04/05/25</div>
<div class="cell" style="left:598px;top:330px">04/07/25</div>
<div class="rn" style="top:356.8px;color:#b4b4b4">15</div>
<svg class="abs" style="left:138.2px;top:354.5px" width="13" height="15" viewBox="0 0 13 15"><path d="M1.400 1.200H11L9.100 4.400L11 7.700H1.400" fill="none" stroke="#bebebe" stroke-width="0.900"/><path d="M1.400 0v14" stroke="#bebebe" stroke-width="0.900"/></svg>
<div class="cell" style="left:220px;top:355px">Sub-task 2</div>
<div class="cell" style="left:522px;top:355px">04/05/25</div>
<div class="cell" style="left:598px;top:355px">04/08/25</div>
<div class="rn" style="top:381.8px;color:#b4b4b4">16</div>
<div class="rn" style="top:406.8px;color:#b4b4b4">17</div>
<div class="rn" style="top:431.8px;color:#b4b4b4">18</div>
<div class="rn" style="top:456.8px;color:#b4b4b4">19</div>
<div class="rn" style="top:481.8px;color:#b4b4b4">20</div>
<div class="rn" style="top:506.8px;color:#b4b4b4">21</div>
<div class="rn" style="top:531.8px;color:#b4b4b4">22</div>
<div class="rn" style="top:556.8px;color:#1d2f4f">23</div>
<div class="rn" style="top:581.8px;color:#b4b4b4">24</div>
<div class="rn" style="top:606.8px;color:#b4b4b4">25</div>
<div class="abs" style="left:45px;top:556.6px;width:15px;height:12.500px;background:#dcdcdc;border:1px solid #ababab;border-radius:2px"></div>
<div class="abs" style="left:49.500px;top:561px;width:0;height:0;border-left:3px solid transparent;border-right:3px solid transparent;border-top:4px solid #222"></div>
<svg class="abs" style="left:68.7px;top:557.3px" width="8" height="12.500" viewBox="0 0 8 12.500"><path d="M6.900 3.400v4.900a3 3 0 0 1-6 0V2.600a1.850 1.850 0 0 1 3.700 0v5.500a0.850 0.850 0 0 1-1.700 0V3.400" fill="none" stroke="#c6c6c6" stroke-width="1.1" stroke-linecap="round"/></svg>
<svg class="abs" style="left:86.5px;top:558px" width="13" height="12" viewBox="0 0 13 12"><path d="M0.700 0.700h11v7.600h-1.600v2.600l-2.700-2.600h-6.700z" fill="none" stroke="#c2c2c2" stroke-width="1.1" stroke-linejoin="round"/></svg>
<svg class="abs" style="left:106.500px;top:557.8px" width="12" height="13" viewBox="0 0 12 13"><path d="M5.500 0.600c-2.200 0-3.400 1.700-3.400 3.700v3.400L0.600 9.800v.5h9.800v-.5L8.900 7.700V4.300C8.900 2.300 7.700 0.600 5.500 0.600z" fill="none" stroke="#c2c2c2" stroke-width="1"/><path d="M4.300 10.600a1.200 1.200 0 0 0 2.400 0" fill="none" stroke="#c2c2c2" stroke-width="1"/></svg>
<div class="abs" style="left:854px;top:0;width:524px;height:617px;overflow:hidden">
<div class="abs" style="left:-19px;top:0;width:22px;height:617px;background:#f2f2f2"></div>
<div class="abs" style="left:3px;top:0;width:22px;height:617px;background:#f2f2f2"></div>
<div class="abs" style="left:135px;top:0;width:22px;height:617px;background:#f2f2f2"></div>
<div class="abs" style="left:157px;top:0;width:22px;height:617px;background:#f2f2f2"></div>
<div class="abs" style="left:289px;top:0;width:22px;height:617px;background:#f2f2f2"></div>
<div class="abs" style="left:311px;top:0;width:22px;height:617px;background:#f2f2f2"></div>
<div class="abs" style="left:443px;top:0;width:22px;height:617px;background:#f2f2f2"></div>
<div class="abs" style="left:465px;top:0;width:22px;height:617px;background:#f2f2f2"></div>
<div class="abs" style="left:0;top:551px;width:524px;height:24px;background:#efefef"></div>
<div class="hl" style="left:0;top:25px;width:524px"></div>
<div class="hl" style="left:0;top:50px;width:524px"></div>
<div class="hl" style="left:0;top:75px;width:524px"></div>
<div class="hl" style="left:0;top:100px;width:524px"></div>
<div class="hl" style="left:0;top:125px;width:524px"></div>
<div class="hl" style="left:0;top:150px;width:524px"></div>
<div class="hl" style="left:0;top:175px;width:524px"></div>
<div class="hl" style="left:0;top:200px;width:524px"></div>
<div class="hl" style="left:0;top:225px;width:524px"></div>
<div class="hl" style="left:0;top:250px;width:524px"></div>
<div class="hl" style="left:0;top:275px;width:524px"></div>
<div class="hl" style="left:0;top:300px;width:524px"></div>
<div class="hl" style="left:0;top:325px;width:524px"></div>
<div class="hl" style="left:0;top:350px;width:524px"></div>
<div class="hl" style="left:0;top:375px;width:524px"></div>
<div class="hl" style="left:0;top:400px;width:524px"></div>
<div class="hl" style="left:0;top:425px;width:524px"></div>
<div class="hl" style="left:0;top:450px;width:524px"></div>
<div class="hl" style="left:0;top:475px;width:524px"></div>
<div class="hl" style="left:0;top:500px;width:524px"></div>
<div class="hl" style="left:0;top:525px;width:524px"></div>
<div class="hl" style="left:0;top:550px;width:524px"></div>
<div class="hl" style="left:0;top:575px;width:524px"></div>
<div class="hl" style="left:0;top:600px;width:524px"></div>
<div class="hl" style="left:0;top:625px;width:524px"></div>
<div class="vl" style="left:3px;top:0;height:617px;background:#c9c9c9"></div>
<div class="vl" style="left:25px;top:0;height:617px;background:#dcdcdc"></div>
<div class="vl" style="left:47px;top:0;height:617px;background:#dcdcdc"></div>
<div class="vl" style="left:69px;top:0;height:617px;background:#dcdcdc"></div>
<div class="vl" style="left:91px;top:0;height:617px;background:#dcdcdc"></div>
<div class="vl" style="left:113px;top:0;height:617px;background:#dcdcdc"></div>
<div class="vl" style="left:135px;top:0;height:617px;background:#dcdcdc"></div>
<div class="vl" style="left:157px;top:0;height:617px;background:#c9c9c9"></div>
<div class="vl" style="left:179px;top:0;height:617px;background:#dcdcdc"></div>
<div class="vl" style="left:201px;top:0;height:617px;background:#dcdcdc"></div>
<div class="vl" style="left:223px;top:0;height:617px;background:#dcdcdc"></div>
<div class="vl" style="left:245px;top:0;height:617px;background:#dcdcdc"></div>
<div class="vl" style="left:267px;top:0;height:617px;background:#dcdcdc"></div>
<div class="vl" style="left:289px;top:0;height:617px;background:#dcdcdc"></div>
<div class="vl" style="left:311px;top:0;height:617px;background:#c9c9c9"></div>
<div class="vl" style="left:333px;top:0;height:617px;background:#dcdcdc"></div>
<div class="vl" style="left:355px;top:0;height:617px;background:#dcdcdc"></div>
<div class="vl" style="left:377px;top:0;height:617px;background:#dcdcdc"></div>
<div class="vl" style="left:399px;top:0;height:617px;background:#dcdcdc"></div>
<div class="vl" style="left:421px;top:0;height:617px;background:#dcdcdc"></div>
<div class="vl" style="left:443px;top:0;height:617px;background:#dcdcdc"></div>
<div class="vl" style="left:465px;top:0;height:617px;background:#c9c9c9"></div>
<div class="vl" style="left:487px;top:0;height:617px;background:#dcdcdc"></div>
<div class="vl" style="left:509px;top:0;height:617px;background:#dcdcdc"></div>
<div class="vl" style="left:531px;top:0;height:617px;background:#dcdcdc"></div>
<div class="abs" style="left:0;top:1px;width:524px;height:24px;background:#1048b5"></div>
<div class="abs" style="left:0;top:126px;width:524px;height:24px;background:#616161"></div>
<div class="abs" style="left:0;top:226px;width:524px;height:24px;background:#45a540"></div>
<svg class="abs" style="left:4px;top:6px" width="198" height="18" viewBox="0 0 198 18"><path d="M0.500 0.500H196.5V17L190.5 10.500H6.500L0.500 17Z" fill="#c1c1c1" stroke="#a49f9a" stroke-width="1"/></svg>
<div class="abs" style="left:5px;top:8px;width:79px;height:7px;background:#dedede;border:1px solid #959a9e;border-left:none"></div>
<div class="t" style="left:207.50px;top:4.74px;font-size:11px;color:#27314a;font-weight:normal;font-style:normal;transform:scaleX(0.9509);transform-origin:0 0;-webkit-text-stroke:0.2px currentColor;">Section 1 - enter your own text here</div>
<div class="abs" style="left:4px;top:31px;width:132px;height:14px;background:#4b9ff5;border:1px solid #b3afaa"></div>
<div class="abs" style="left:5px;top:34px;width:65px;height:8px;background:#a4caf6;border:1px solid #4a7fc6;border-left:none"></div>
<div class="t" style="left:141.50px;top:29.74px;font-size:11px;color:#333;font-weight:normal;font-style:normal;transform:scaleX(0.9553);transform-origin:0 0;-webkit-text-stroke:0.2px currentColor;">Sub-task 1 - enter task and timing</div>
<div class="abs" style="left:114px;top:56px;width:88px;height:14px;background:#4b9ff5;border:1px solid #b3afaa"></div>
<div class="abs" style="left:115px;top:59px;width:43px;height:8px;background:#a4caf6;border:1px solid #4a7fc6;border-left:none"></div>
<div class="t" style="left:207.50px;top:54.74px;font-size:11px;color:#333;font-weight:normal;font-style:normal;transform:scaleX(0.9359);transform-origin:0 0;-webkit-text-stroke:0.2px currentColor;">Sub-task 2</div>
<div class="abs" style="left:158px;top:81px;width:44px;height:14px;background:#4b9ff5;border:1px solid #b3afaa"></div>
<div class="t" style="left:207.50px;top:79.74px;font-size:11px;color:#333;font-weight:normal;font-style:normal;transform:scaleX(0.9359);transform-origin:0 0;-webkit-text-stroke:0.2px currentColor;">Sub-task 3</div>
<svg class="abs" style="left:196px;top:106px" width="12" height="16" viewBox="0 0 12 16"><path d="M5.600 0L11.100 7.500L5.600 15L0.100 7.500Z" fill="#4a4a4a"/></svg>
<div class="t" style="left:211.50px;top:104.74px;font-size:11px;color:#333;font-weight:normal;font-style:normal;transform:scaleX(0.9495);transform-origin:0 0;-webkit-text-stroke:0.2px currentColor;">Milestone 1</div>
<svg class="abs" style="left:224px;top:131px" width="132" height="18" viewBox="0 0 132 18"><path d="M0.500 0.500H130.5V17L124.5 10.500H6.500L0.500 17Z" fill="#c1c1c1" stroke="#a49f9a" stroke-width="1"/></svg>
<div class="t" style="left:361.00px;top:129.74px;font-size:11px;color:#3a3a3a;font-weight:normal;font-style:normal;transform:scaleX(0.9596);transform-origin:0 0;-webkit-text-stroke:0.2px currentColor;">Section 2</div>
<div class="abs" style="left:224px;top:156px;width:44px;height:14px;background:#dddddd;border:1px solid #a6a8aa"></div>
<div class="t" style="left:273.10px;top:154.74px;font-size:11px;color:#333;font-weight:normal;font-style:normal;transform:scaleX(0.9282);transform-origin:0 0;-webkit-text-stroke:0.2px currentColor;">Sub-task 1</div>
<div class="abs" style="left:246px;top:181px;width:110px;height:14px;background:#e31f27;border:1px solid #c7bcbc"></div>
<div class="t" style="left:361.00px;top:179.74px;font-size:11px;color:#333;font-weight:normal;font-style:normal;transform:scaleX(0.9473);transform-origin:0 0;-webkit-text-stroke:0.2px currentColor;">Sub-task 2</div>
<div class="abs" style="left:246px;top:206px;width:110px;height:14px;background:#dddddd;border:1px solid #a6a8aa"></div>
<div class="t" style="left:361.00px;top:204.74px;font-size:11px;color:#333;font-weight:normal;font-style:normal;transform:scaleX(0.9378);transform-origin:0 0;-webkit-text-stroke:0.2px currentColor;">Sub-task 3</div>
<svg class="abs" style="left:290px;top:231px" width="374" height="18" viewBox="0 0 374 18"><path d="M0.500 0.500H372.5V17L366.5 10.500H6.500L0.500 17Z" fill="#c1c1c1" stroke="#a49f9a" stroke-width="1"/></svg>
<div class="abs" style="left:290px;top:256px;width:132px;height:14px;background:#6fc774;border:1px solid #9cba9c"></div>
<div class="t" style="left:427.10px;top:254.74px;font-size:11px;color:#333;font-weight:normal;font-style:normal;transform:scaleX(0.9282);transform-origin:0 0;-webkit-text-stroke:0.2px currentColor;">Sub-task 1</div>
<div class="abs" style="left:400px;top:281px;width:110px;height:14px;background:#6fc774;border:1px solid #9cba9c"></div>
<div class="t" style="left:515.10px;top:279.74px;font-size:11px;color:#333;font-weight:normal;font-style:normal;transform:scaleX(0.9359);transform-origin:0 0;-webkit-text-stroke:0.2px currentColor;">Sub-task 2</div>
<svg class="abs" style="left:444px;top:306px" width="220" height="18" viewBox="0 0 220 18"><path d="M0.500 0.500H218.5V17L212.5 10.500H6.500L0.500 17Z" fill="#c1c1c1" stroke="#a49f9a" stroke-width="1"/></svg>
<div class="abs" style="left:444px;top:331px;width:66px;height:14px;background:#bbe2bb;border:1px solid #a9c4a9"></div>
<div class="t" style="left:515.10px;top:329.74px;font-size:11px;color:#333;font-weight:normal;font-style:normal;transform:scaleX(0.9282);transform-origin:0 0;-webkit-text-stroke:0.2px currentColor;">Sub-task 1</div>
<div class="abs" style="left:444px;top:356px;width:88px;height:14px;background:#bbe2bb;border:1px solid #a9c4a9"></div>
</div>
<div class="abs" style="left:1386px;top:2px;width:7px;height:309px;background:#707070;border-radius:4px"></div>
</div>
<div class="abs" style="left:854px;top:126px;width:541px;height:40px;background:#dedede;overflow:hidden">
<div class="vl" style="left:3px;top:0;height:40px;background:#c6c6c6"></div>
<div class="t" style="left:59.64px;top:3.00px;font-size:13px;color:#222;font-weight:normal;font-style:normal;transform:scaleX(1.0120);transform-origin:0 0;-webkit-text-stroke:0.2px currentColor;">Mar 16</div>
<div class="vl" style="left:157px;top:0;height:40px;background:#c6c6c6"></div>
<div class="t" style="left:213.69px;top:3.00px;font-size:13px;color:#222;font-weight:normal;font-style:normal;transform:scaleX(1.0094);transform-origin:0 0;-webkit-text-stroke:0.2px currentColor;">Mar 23</div>
<div class="vl" style="left:311px;top:0;height:40px;background:#c6c6c6"></div>
<div class="t" style="left:367.64px;top:3.00px;font-size:13px;color:#222;font-weight:normal;font-style:normal;transform:scaleX(1.0120);transform-origin:0 0;-webkit-text-stroke:0.2px currentColor;">Mar 30</div>
<div class="vl" style="left:465px;top:0;height:40px;background:#c6c6c6"></div>
<div class="t" style="left:526.00px;top:3.00px;font-size:13px;color:#222;font-weight:normal;font-style:normal;transform:scaleX(1.0700);transform-origin:0 0;-webkit-text-stroke:0.2px currentColor;">Apr 6</div>
<div class="hl" style="left:0;top:20px;width:541px;background:#c6c6c6"></div>
<div class="vl" style="left:3px;top:21px;height:19px;background:#c6c6c6"></div>
<div class="t" style="left:10.80px;top:22.90px;font-size:13px;color:#222;font-weight:normal;font-style:normal;transform:scaleX(0.8222);transform-origin:0 0;-webkit-text-stroke:0.2px currentColor;">S</div>
<div class="vl" style="left:25px;top:21px;height:19px;background:#c6c6c6"></div>
<div class="t" style="left:30.27px;top:22.90px;font-size:13px;color:#222;font-weight:normal;font-style:normal;transform:scaleX(1.1333);transform-origin:0 0;-webkit-text-stroke:0.2px currentColor;">M</div>
<div class="vl" style="left:47px;top:21px;height:19px;background:#c6c6c6"></div>
<div class="t" style="left:54.80px;top:22.90px;font-size:13px;color:#222;font-weight:normal;font-style:normal;transform:scaleX(0.9250);transform-origin:0 0;-webkit-text-stroke:0.2px currentColor;">T</div>
<div class="vl" style="left:69px;top:21px;height:19px;background:#c6c6c6"></div>
<div class="t" style="left:74.95px;top:22.90px;font-size:13px;color:#222;font-weight:normal;font-style:normal;transform:scaleX(0.8538);transform-origin:0 0;-webkit-text-stroke:0.2px currentColor;">W</div>
<div class="vl" style="left:91px;top:21px;height:19px;background:#c6c6c6"></div>
<div class="t" style="left:98.80px;top:22.90px;font-size:13px;color:#222;font-weight:normal;font-style:normal;transform:scaleX(0.9250);transform-origin:0 0;-webkit-text-stroke:0.2px currentColor;">T</div>
<div class="vl" style="left:113px;top:21px;height:19px;background:#c6c6c6"></div>
<div class="t" style="left:120.45px;top:22.90px;font-size:13px;color:#222;font-weight:normal;font-style:normal;transform:scaleX(0.9000);transform-origin:0 0;-webkit-text-stroke:0.2px currentColor;">F</div>
<div class="vl" style="left:135px;top:21px;height:19px;background:#c6c6c6"></div>
<div class="t" style="left:142.80px;top:22.90px;font-size:13px;color:#222;font-weight:normal;font-style:normal;transform:scaleX(0.8222);transform-origin:0 0;-webkit-text-stroke:0.2px currentColor;">S</div>
<div class="vl" style="left:157px;top:21px;height:19px;background:#c6c6c6"></div>
<div class="t" style="left:164.80px;top:22.90px;font-size:13px;color:#222;font-weight:normal;font-style:normal;transform:scaleX(0.8222);transform-origin:0 0;-webkit-text-stroke:0.2px currentColor;">S</div>
<div class="vl" style="left:179px;top:21px;height:19px;background:#c6c6c6"></div>
<div class="t" style="left:184.27px;top:22.90px;font-size:13px;color:#222;font-weight:normal;font-style:normal;transform:scaleX(1.1333);transform-origin:0 0;-webkit-text-stroke:0.2px currentColor;">M</div>
<div class="vl" style="left:201px;top:21px;height:19px;background:#c6c6c6"></div>
<div class="t" style="left:208.80px;top:22.90px;font-size:13px;color:#222;font-weight:normal;font-style:normal;transform:scaleX(0.9250);transform-origin:0 0;-webkit-text-stroke:0.2px currentColor;">T</div>
<div class="vl" style="left:223px;top:21px;height:19px;background:#c6c6c6"></div>
<div class="t" style="left:228.95px;top:22.90px;font-size:13px;color:#222;font-weight:normal;font-style:normal;transform:scaleX(0.8538);transform-origin:0 0;-webkit-text-stroke:0.2px currentColor;">W</div>
<div class="vl" style="left:245px;top:21px;height:19px;background:#c6c6c6"></div>
<div class="t" style="left:252.80px;top:22.90px;font-size:13px;color:#222;font-weight:normal;font-style:normal;transform:scaleX(0.9250);transform-origin:0 0;-webkit-text-stroke:0.2px currentColor;">T</div>
<div class="vl" style="left:267px;top:21px;height:19px;background:#c6c6c6"></div>
<div class="t" style="left:274.45px;top:22.90px;font-size:13px;color:#222;font-weight:normal;font-style:normal;transform:scaleX(0.9000);transform-origin:0 0;-webkit-text-stroke:0.2px currentColor;">F</div>
<div class="vl" style="left:289px;top:21px;height:19px;background:#c6c6c6"></div>
<div class="t" style="left:296.80px;top:22.90px;font-size:13px;color:#222;font-weight:normal;font-style:normal;transform:scaleX(0.8222);transform-origin:0 0;-webkit-text-stroke:0.2px currentColor;">S</div>
<div class="vl" style="left:311px;top:21px;height:19px;background:#c6c6c6"></div>
<div class="t" style="left:318.80px;top:22.90px;font-size:13px;color:#222;font-weight:normal;font-style:normal;transform:scaleX(0.8222);transform-origin:0 0;-webkit-text-stroke:0.2px currentColor;">S</div>
<div class="vl" style="left:333px;top:21px;height:19px;background:#c6c6c6"></div>
<div class="t" style="left:338.27px;top:22.90px;font-size:13px;color:#222;font-weight:normal;font-style:normal;transform:scaleX(1.1333);transform-origin:0 0;-webkit-text-stroke:0.2px currentColor;">M</div>
<div class="vl" style="left:355px;top:21px;height:19px;background:#c6c6c6"></div>
<div class="t" style="left:362.80px;top:22.90px;font-size:13px;color:#222;font-weight:normal;font-style:normal;transform:scaleX(0.9250);transform-origin:0 0;-webkit-text-stroke:0.2px currentColor;">T</div>
<div class="vl" style="left:377px;top:21px;height:19px;background:#c6c6c6"></div>
<div class="t" style="left:382.95px;top:22.90px;font-size:13px;color:#222;font-weight:normal;font-style:normal;transform:scaleX(0.8538);transform-origin:0 0;-webkit-text-stroke:0.2px currentColor;">W</div>
<div class="vl" style="left:399px;top:21px;height:19px;background:#c6c6c6"></div>
<div class="t" style="left:406.80px;top:22.90px;font-size:13px;color:#222;font-weight:normal;font-style:normal;transform:scaleX(0.9250);transform-origin:0 0;-webkit-text-stroke:0.2px currentColor;">T</div>
<div class="vl" style="left:421px;top:21px;height:19px;background:#c6c6c6"></div>
<div class="t" style="left:428.45px;top:22.90px;font-size:13px;color:#222;font-weight:normal;font-style:normal;transform:scaleX(0.9000);transform-origin:0 0;-webkit-text-stroke:0.2px currentColor;">F</div>
<div class="vl" style="left:443px;top:21px;height:19px;background:#c6c6c6"></div>
<div class="t" style="left:450.80px;top:22.90px;font-size:13px;color:#222;font-weight:normal;font-style:normal;transform:scaleX(0.8222);transform-origin:0 0;-webkit-text-stroke:0.2px currentColor;">S</div>
<div class="vl" style="left:465px;top:21px;height:19px;background:#c6c6c6"></div>
<div class="t" style="left:472.80px;top:22.90px;font-size:13px;color:#222;font-weight:normal;font-style:normal;transform:scaleX(0.8222);transform-origin:0 0;-webkit-text-stroke:0.2px currentColor;">S</div>
<div class="vl" style="left:487px;top:21px;height:19px;background:#c6c6c6"></div>
<div class="t" style="left:492.27px;top:22.90px;font-size:13px;color:#222;font-weight:normal;font-style:normal;transform:scaleX(1.1333);transform-origin:0 0;-webkit-text-stroke:0.2px currentColor;">M</div>
<div class="vl" style="left:509px;top:21px;height:19px;background:#c6c6c6"></div>
<div class="t" style="left:516.80px;top:22.90px;font-size:13px;color:#222;font-weight:normal;font-style:normal;transform:scaleX(0.9250);transform-origin:0 0;-webkit-text-stroke:0.2px currentColor;">T</div>
<div class="vl" style="left:531px;top:21px;height:19px;background:#c6c6c6"></div>
<div class="t" style="left:536.95px;top:22.90px;font-size:13px;color:#222;font-weight:normal;font-style:normal;transform:scaleX(0.8538);transform-origin:0 0;-webkit-text-stroke:0.2px currentColor;">W</div>
</div>
<div class="hl" style="left:854px;top:166px;width:541px;background:#c6c6c6"></div>
<div class="abs" style="left:854px;top:167px;width:541px;height:15px;background:#f0f0f0"></div>
<div class="hl" style="left:854px;top:182px;width:541px;background:#bdbdbd"></div>
<svg class="abs" style="left:1380px;top:170px" width="9" height="9" viewBox="0 0 9 9"><path d="M1.200 1.200L7.800 7.800M7.800 1.200L1.200 7.800" stroke="#222" stroke-width="1.700"/></svg>
<div class="abs" style="left:849px;top:126px;width:5px;height:683px;background:#f6f6f6"></div>
<div class="abs" style="left:849px;top:126px;width:1px;height:683px;background:#f0f0f0"></div>
<div class="abs" style="left:850px;top:126px;width:1px;height:683px;background:#c4c4c4"></div>
<div class="abs" style="left:853px;top:126px;width:1px;height:683px;background:#c9c9c9"></div>
<div class="abs" style="left:1395px;top:126px;width:37px;height:683px;background:#f0f0f0"></div>
<div class="abs" style="left:1395px;top:126px;width:1px;height:683px;background:#e2e2e2"></div>
<svg class="abs" style="left:1395px;top:126px" width="37" height="683" viewBox="1395 126 37 683"><path d="M1409.400 140.400h11.200v8h-1.800v2.600l-3-2.600h-6.400z" fill="none" stroke="#222" stroke-width="1.300" stroke-linejoin="round"/><path d="M1418.600 181v4.500a3.400 3.400 0 0 1-6.800 0v-5.300a2.300 2.300 0 0 1 4.600 0v5.100a1.100 1.100 0 0 1-2.200 0v-4.300" fill="none" stroke="#222" stroke-width="1.200" stroke-linecap="round"/><rect x="1409.300" y="217.600" width="11" height="8" fill="none" stroke="#222" stroke-width="1.200"/><path d="M1409.500 218l5.300 4.300 5.300-4.300" fill="none" stroke="#222" stroke-width="1.100"/><circle cx="1420.700" cy="217.600" r="4.500" fill="#1a5fe8"/><text x="1420.700" y="220.300" font-family="Liberation Sans" font-weight="bold" font-size="7.500" text-anchor="middle" fill="#fff">?</text><circle cx="1415" cy="258.500" r="6.200" fill="#1a5fe8"/><path d="M1412.500 253.500q2-.8 3.500-.2q-.2 1.200-1.600 1.600q-.5 1.400.8 2.200q1.800.6 1.600 2.300q-.6 1.800-2 2.400q-.6-1.600-.3-2.800q-1.600-.8-1.800-2.600q-.2-1.500-.2-2.900z" fill="#fff"/><path d="M1418.300 254.500q1.300.8 1.800 2.400q-1.200.1-1.900-.8z" fill="#fff"/><path d="M1408 294.600h3.500M1418.200 294.600h4M1408 300.500h5M1420.200 300.500h2" stroke="#222" stroke-width="1.100"/><path d="M1408 297.600h4l2.500-5.500 2.700 10.500 2-5h3" fill="none" stroke="#1a5fe8" stroke-width="1.300" stroke-linejoin="round"/><path d="M1410.300 329.500h9v8.500l-3.500 3h-5.500z" fill="#fff" stroke="#222" stroke-width="1.100"/><path d="M1419.300 338l-3.500 3v-3z" fill="#222"/><rect x="1408" y="331" width="4.800" height="8.700" fill="#1a5fe8"/><path d="M1409 333.200h2.800M1409 335.400h2.800M1409 337.600h2.800" stroke="#fff" stroke-width="0.900"/><path d="M1402 354.500h25.600" stroke="#dcdcdc" stroke-width="1"/><rect x="1408" y="368" width="6" height="6" fill="#707070"/><rect x="1415.2" y="368" width="6" height="6" fill="#707070"/><rect x="1408" y="375.2" width="6" height="6" fill="#707070"/><rect x="1415.2" y="375.2" width="6" height="6" fill="#707070"/><path d="M1414.5 405.5h7v7l-2.400-2.400v3.300h-2.300v-5.600z" fill="#707070" stroke="#f0f0f0" stroke-width="0.500"/><path d="M1411.2 408.6h7v7l-2.400-2.400v3.300h-2.300v-5.600z" fill="#707070" stroke="#f0f0f0" stroke-width="0.500"/><path d="M1407.9 411.7h7v7l-2.400-2.400v3.300h-2.300v-5.600z" fill="#707070" stroke="#f0f0f0" stroke-width="0.500"/><path d="M1410 454.300a3 3 0 0 1-1.800-5.600a3.400 3.400 0 0 1 5.200-2.600a3.200 3.200 0 0 1 4.800.3a3.300 3.300 0 0 1 4.600 2.300a2.800 2.800 0 0 1-1.700 4.900a3 3 0 0 1-4 .6a3.200 3.200 0 0 1-4.200 .2a3.500 3.500 0 0 1-2.900-.1z" fill="#707070"/></svg>
<div class="abs" style="left:0;top:800px;width:63px;height:9px;background:#d3d3d3;border-top:1px solid #c2c2c2;border-right:1px solid #c2c2c2"></div>
<div class="abs" style="left:0;top:800px;width:16px;height:9px;background:#e6e6e6;border-top:1px solid #c6c6c6;border-right:1px solid #b5b5b5"></div>
<svg class="abs" style="left:0;top:800px" width="16" height="9" viewBox="0 0 16 9"><path d="M0 3.500l3.500 3.500M0 3.500v-2M0 3.500h0M6.500 7l4-4.500M10.500 2.500h-3M10.500 2.500v3" stroke="#222" stroke-width="1.400" fill="none"/><path d="M-1 2.500h3.500M-0.200 2v3.500" stroke="#222" stroke-width="1.400" fill="none"/></svg>
</div></body></html>
